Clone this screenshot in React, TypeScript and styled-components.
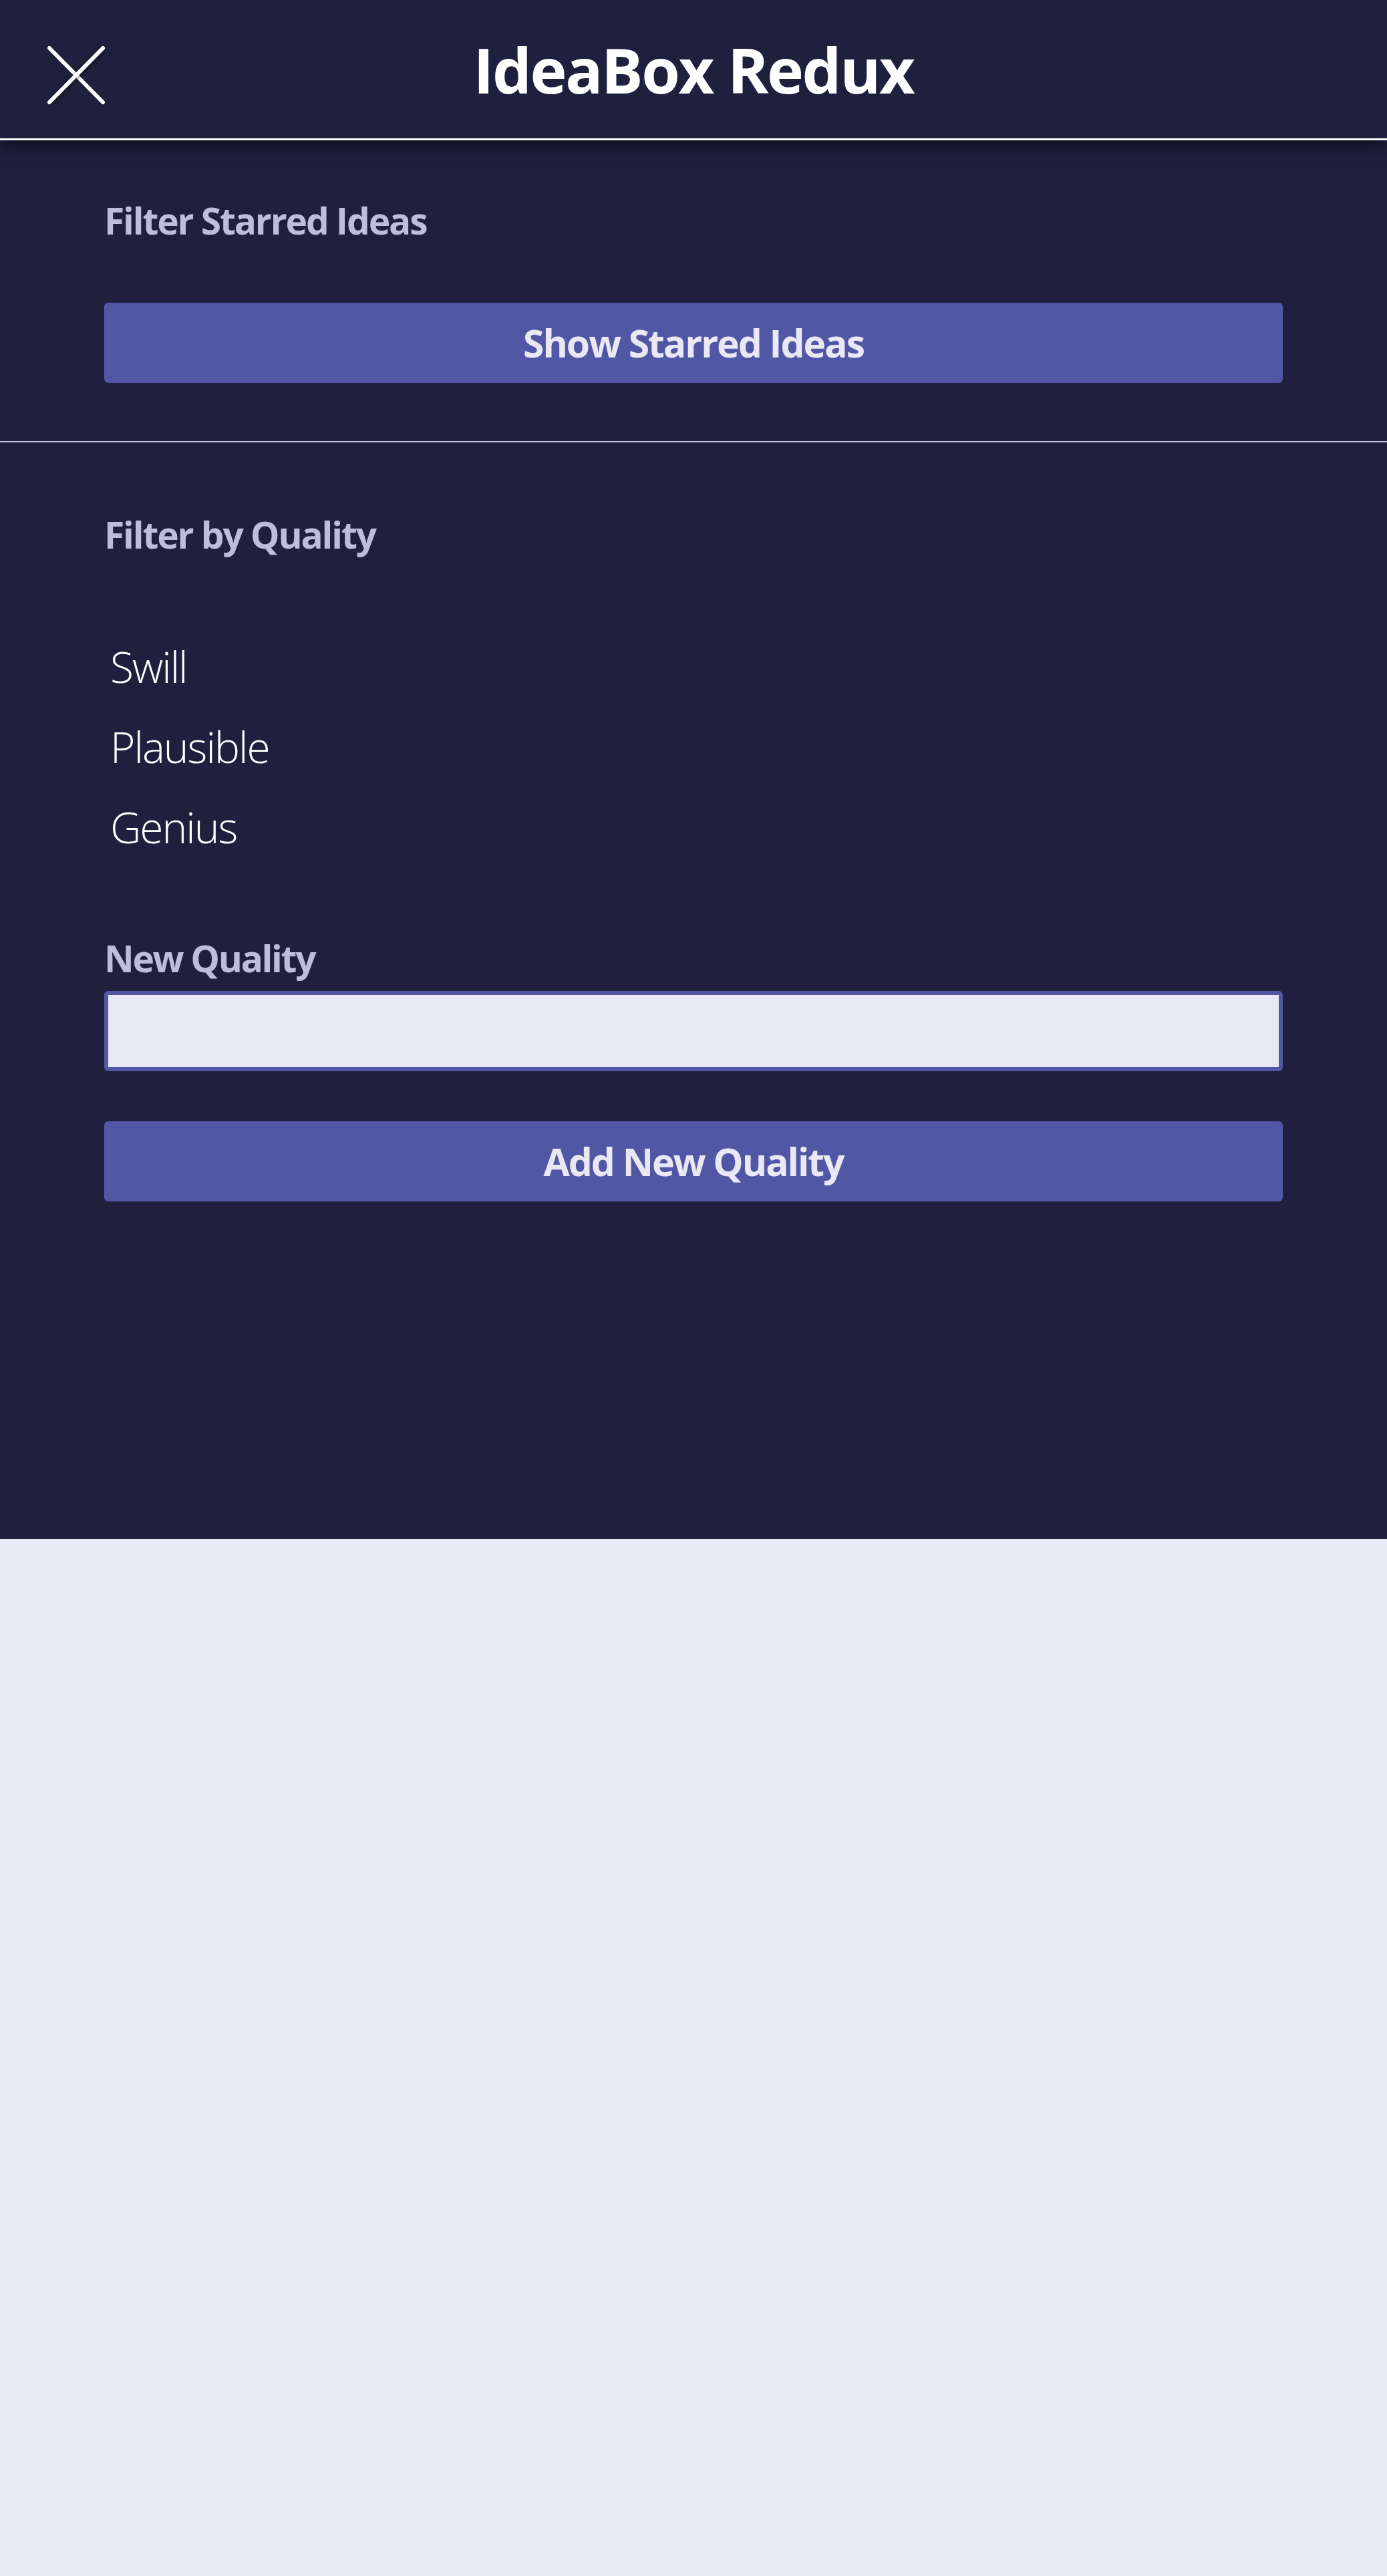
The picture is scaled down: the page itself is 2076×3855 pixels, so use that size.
import styled, { createGlobalStyle } from "styled-components"

const Colors = {
    Dark: '#1f1f3e',
    Light: '#eaeaf5',
    Accent: '#5257a5',
    Label: '#bfbddf',
    Divider: '#c4c2e3',
}

const qualities = ['Swill', 'Plausible', 'Genius']

const GlobalStyle = createGlobalStyle`
    html, body {
        margin: 0;
        padding: 0;
        background: ${Colors.Light};
        font-family: "Open Sans", "Noto Sans", sans-serif;
    }
    * {
        box-sizing: border-box;
    }
`

const Page = styled.div`
    min-height: 3855px;
    background: ${Colors.Light};
`
const Menu = styled.aside`
    background: ${Colors.Dark};
    padding-bottom: 505px;
`
const Header = styled.header`
    position: relative;
    z-index: 1;
    height: 210px;
    display: grid;
    grid-template-columns: 1fr auto 1fr;
    align-items: center;
    padding: 0 70px;
    background: ${Colors.Dark};
    border-bottom: 3px solid #ffffff;
    box-shadow: 0 8px 22px rgba(0, 0, 0, 0.55);
`
const CloseButton = styled.button`
    justify-self: start;
    margin-top: 18px;
    width: 88px;
    height: 89px;
    padding: 0;
    border: none;
    background: transparent;
    cursor: pointer;
    display: flex;
`
const Title = styled.h1`
    margin: 0;
    font-size: 93px;
    font-weight: 700;
    letter-spacing: -2.3px;
    color: #ffffff;
    line-height: normal;
    white-space: nowrap;
`
const Section = styled.section<{ $top: number; $bottom: number; $divided?: boolean }>`
    padding: ${p => p.$top}px 156px ${p => p.$bottom}px;
    border-bottom: ${p => (p.$divided ? `2px solid ${Colors.Divider}` : 'none')};
`
const Label = styled.h2<{ $gap: number }>`
    margin: 0 0 ${p => p.$gap}px;
    font-size: 55px;
    font-weight: 700;
    letter-spacing: -2.1px;
    line-height: normal;
    color: ${Colors.Label};
`
const FieldLabel = styled.label`
    display: block;
    margin: 98px 0 12px;
    font-size: 55px;
    font-weight: 700;
    letter-spacing: -2.3px;
    line-height: normal;
    color: ${Colors.Label};
`
const Button = styled.button<{ $gap?: number }>`
    display: block;
    width: 100%;
    height: 120px;
    margin-top: ${p => p.$gap ?? 0}px;
    border: none;
    border-radius: 6px;
    background: ${Colors.Accent};
    color: #e9e9f5;
    font-family: inherit;
    font-size: 57px;
    font-weight: 700;
    letter-spacing: -2px;
    cursor: pointer;
`
const QualityList = styled.ul`
    list-style: none;
    margin: 0;
    padding: 0;
`
const QualityItem = styled.li`
    padding-left: 9px;
    font-size: 64px;
    font-weight: 300;
    letter-spacing: -2px;
    line-height: 120px;
    color: #ffffff;
`
const QualityInput = styled.input`
    display: block;
    width: 100%;
    height: 120px;
    border: 6px solid ${Colors.Accent};
    border-radius: 6px;
    background: #e8e8f3;
    font-family: inherit;
    font-size: 50px;
    padding: 0 20px;
    outline: none;
`

const CloseIcon = () => (
    <svg width="88" height="89" viewBox="0 0 88 89" fill="none">
        <defs>
            <filter id="barShadow" x="-30%" y="-30%" width="160%" height="160%">
                <feDropShadow dx="0" dy="2" stdDeviation="3" floodColor="#000" floodOpacity="0.55" />
            </filter>
        </defs>
        <line x1="4" y1="4" x2="84" y2="85" stroke="#fff" strokeWidth="6" strokeLinecap="round" />
        <line x1="84" y1="4" x2="4" y2="85" stroke="#fff" strokeWidth="6" strokeLinecap="round" filter="url(#barShadow)" />
    </svg>
)

export default function App() {
    return (
        <Page>
            <GlobalStyle />
            <Menu>
                <Header>
                    <CloseButton aria-label="Close menu">
                        <CloseIcon />
                    </CloseButton>
                    <Title>IdeaBox Redux</Title>
                    <span />
                </Header>
                <Section $top={82} $bottom={87} $divided>
                    <Label $gap={86}>Filter Starred Ideas</Label>
                    <Button>Show Starred Ideas</Button>
                </Section>
                <Section $top={100} $bottom={0}>
                    <Label $gap={101}>Filter by Quality</Label>
                    <QualityList>
                        {qualities.map(q => (
                            <QualityItem key={q}>{q}</QualityItem>
                        ))}
                    </QualityList>
                    <FieldLabel htmlFor="new-quality">New Quality</FieldLabel>
                    <QualityInput id="new-quality" type="text" />
                    <Button $gap={75}>Add New Quality</Button>
                </Section>
            </Menu>
        </Page>
    )
}
